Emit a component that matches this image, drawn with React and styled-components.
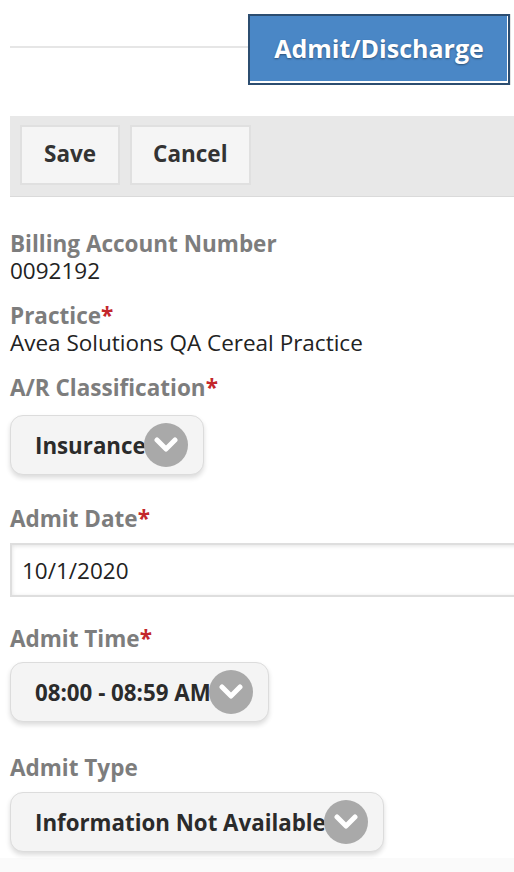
import React from "react";
import styled, { createGlobalStyle } from "styled-components";

const Global = createGlobalStyle`
  body {
    margin: 0;
    background: #ffffff;
    font-family: "Open Sans", "Liberation Sans", sans-serif;
    color: #333;
  }
`;

// 페이지 전체
const Page = styled.div`
  width: 514px;
  min-height: 872px;
  overflow: hidden;
  background: linear-gradient(to bottom, #fff 858px, #fafafa 858px);
`;

// 상단 탭 영역
const TabBar = styled.div`
  display: flex;
  align-items: flex-start;
  padding: 14px 0 0 10px;
`;

const TabLine = styled.div`
  flex: 0 0 238px;
  height: 2px;
  margin-top: 32px;
  background: #e6e6e6;
`;

const Tab = styled.div`
  width: 262px;
  height: 71px;
  padding-bottom: 4px;
  box-sizing: border-box;
  display: flex;
  align-items: center;
  justify-content: center;
  background: #4a87c6;
  border: 2px solid #2c4d70;
  box-shadow: inset -1px -2px 0 #ffffff;
  color: #fff;
  font-size: 25px;
  font-weight: 700;
  text-shadow: 0 1px 2px rgba(0, 0, 0, 0.4);
`;

const TabEdge = styled.div`
  width: 2px;
  height: 71px;
  border-left: 1px solid #e2e2e2;
`;

// 저장/취소 툴바
const Toolbar = styled.div`
  display: flex;
  gap: 10px;
  margin: 31px 0 0 10px;
  padding: 9px 10px 0;
  height: 71px;
  background: #e8e8e8;
  border-bottom: 1px solid #dadada;
`;

const ToolButton = styled.button`
  height: 60px;
  padding: 0 ${(p) => p.$pad}px 3px;
  background: #f5f5f5;
  border: 2px solid #e0e0e0;
  font-family: inherit;
  font-size: 22.5px;
  font-weight: 700;
  color: #333;
`;

// 폼 영역
const Form = styled.div`
  padding: 33px 0 0 10px;
`;

const Field = styled.div`
  margin-bottom: ${(p) => p.$gap}px;
`;

const Label = styled.div`
  font-size: 22.5px;
  font-weight: 700;
  line-height: 27px;
  color: #7d7d7d;
  text-shadow: 0 1px 0 #fff;
`;

const Req = styled.span`
  color: #c3272b;
`;

const Value = styled.div`
  font-size: 22.5px;
  line-height: 28px;
  color: #222;
`;

const Select = styled.div`
  display: inline-flex;
  align-items: center;
  height: 60px;
  box-sizing: border-box;
  margin-top: ${(p) => p.$top}px;
  padding: 0 15px 0 24px;
  background: #f4f4f4;
  border: 1px solid #dcdcdc;
  border-radius: 13px;
  box-shadow: 0 3px 5px rgba(0, 0, 0, 0.14);
  font-size: 22.3px;
  font-weight: 700;
  color: #2b2b2b;
`;

const Chevron = styled.span`
  width: 44px;
  height: 44px;
  margin-left: -2px;
  border-radius: 50%;
  background: #a9a9a9;
  display: flex;
  align-items: center;
  justify-content: center;
`;

const DateInput = styled.div`
  margin-top: 11px;
  height: 54px;
  box-sizing: border-box;
  width: 520px;
  display: flex;
  align-items: center;
  padding-left: 10px;
  border: 2px solid #dedede;
  box-shadow: inset 0 1px 4px rgba(0, 0, 0, 0.12);
  font-size: 22.5px;
  color: #222;
`;

const ArrowIcon = () => (
  <svg width="24" height="16" viewBox="0 0 24 16">
    <path d="M3 3 L12 12 L21 3" fill="none" stroke="#fff" strokeWidth="5" strokeLinecap="round" strokeLinejoin="round" />
  </svg>
);

const Dropdown = ({ value, top }) => (
  <Select $top={top}>
    {value}
    <Chevron>
      <ArrowIcon />
    </Chevron>
  </Select>
);

const App = () => (
  <Page>
    <Global />
    <TabBar>
      <TabLine />
      <Tab>Admit/Discharge</Tab>
      <TabEdge />
    </TabBar>

    <Toolbar>
      <ToolButton $pad={22}>Save</ToolButton>
      <ToolButton $pad={21}>Cancel</ToolButton>
    </Toolbar>

    <Form>
      <Field $gap={17}>
        <Label>Billing Account Number</Label>
        <Value>0092192</Value>
      </Field>
      <Field $gap={17}>
        <Label>
          Practice<Req>*</Req>
        </Label>
        <Value>Avea Solutions QA Cereal Practice</Value>
      </Field>
      <Field $gap={30}>
        <Label>
          A/R Classification<Req>*</Req>
        </Label>
        <Dropdown value="Insurance" top={14} />
      </Field>
      <Field $gap={28}>
        <Label>
          Admit Date<Req>*</Req>
        </Label>
        <DateInput>10/1/2020</DateInput>
      </Field>
      <Field $gap={32}>
        <Label>
          Admit Time<Req>*</Req>
        </Label>
        <Dropdown value="08:00 - 08:59 AM" top={10} />
      </Field>
      <Field $gap={0}>
        <Label>Admit Type</Label>
        <Dropdown value="Information Not Available" top={11} />
      </Field>
    </Form>
  </Page>
);

export default App;
